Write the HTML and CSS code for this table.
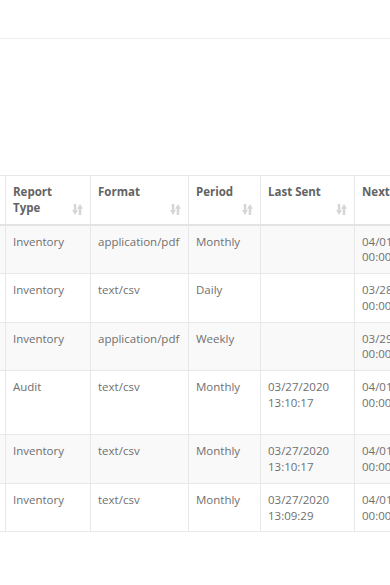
FILE: index.html
```html
<!DOCTYPE html>
<html lang="en">
  <head>
    <meta charset="UTF-8" />
    <meta name="viewport" content="width=device-width, initial-scale=1.0" />
    <title>Scheduled Reports</title>
    <link rel="stylesheet" href="styles.css">
  </head>
  <body>
    <div class="topbar"></div>

    <div class="content">
      <div class="table-wrap">
        <table class="report-table">
          <colgroup>
            <col class="c-name" />
            <col class="c-type" />
            <col class="c-format" />
            <col class="c-period" />
            <col class="c-last" />
            <col class="c-next" />
            <col class="c-recipients" />
          </colgroup>
          <thead>
            <tr>
              <th>Name</th>
              <th>Report Type <span class="sort"></span></th>
              <th>Format <span class="sort"></span></th>
              <th>Period <span class="sort"></span></th>
              <th>Last Sent <span class="sort"></span></th>
              <th>Next Sent <span class="sort"></span></th>
              <th>Recipients</th>
            </tr>
          </thead>
          <tbody>
            <tr>
              <td>Monthly stock</td>
              <td>Inventory</td>
              <td>application/pdf</td>
              <td>Monthly</td>
              <td></td>
              <td>04/01/2020 00:00:00</td>
              <td>ops@example.com</td>
            </tr>
            <tr>
              <td>Daily stock</td>
              <td>Inventory</td>
              <td>text/csv</td>
              <td>Daily</td>
              <td></td>
              <td>03/28/2020 00:00:00</td>
              <td>ops@example.com</td>
            </tr>
            <tr>
              <td>Weekly stock</td>
              <td>Inventory</td>
              <td>application/pdf</td>
              <td>Weekly</td>
              <td></td>
              <td>03/29/2020 00:00:00</td>
              <td>ops@example.com</td>
            </tr>
            <tr>
              <td>Audit log</td>
              <td>Audit</td>
              <td>text/csv</td>
              <td>Monthly</td>
              <td>03/27/2020 13:10:17</td>
              <td>04/01/2020 00:00:00</td>
              <td>admin@example.com audit@example.com ops@example.com</td>
            </tr>
            <tr>
              <td>Stock export</td>
              <td>Inventory</td>
              <td>text/csv</td>
              <td>Monthly</td>
              <td>03/27/2020 13:10:17</td>
              <td>04/01/2020 00:00:00</td>
              <td>ops@example.com</td>
            </tr>
            <tr>
              <td>Stock backup</td>
              <td>Inventory</td>
              <td>text/csv</td>
              <td>Monthly</td>
              <td>03/27/2020 13:09:29</td>
              <td>04/01/2020 00:00:00</td>
              <td>ops@example.com</td>
            </tr>
          </tbody>
        </table>
      </div>
    </div>
  </body>
</html>
```

FILE: styles.css
```css
* {
  margin: 0;
  padding: 0;
  box-sizing: border-box;
}
body {
  background-color: #fff;
  color: #6f6f6f;
  font-family: "Open Sans", sans-serif;
  font-size: 11.5px;
  overflow: hidden;
}
.topbar {
  height: 39px;
  border-bottom: 1px solid #eeeeee;
}
.content {
  padding-top: 136px;
}
.table-wrap {
  overflow: hidden;
  width: 390px;
}
.report-table {
  margin-left: -115px;
  width: 693px;
  table-layout: fixed;
  border-collapse: collapse;
}
.c-name {
  width: 120px;
}
.c-type {
  width: 85px;
}
.c-format {
  width: 98px;
}
.c-period {
  width: 72px;
}
.c-last {
  width: 94px;
}
.c-next {
  width: 94px;
}
.c-recipients {
  width: 130px;
}
.report-table th,
.report-table td {
  border: 1px solid #e8e8e8;
  padding: 8px 7px;
  line-height: 15.75px;
  text-align: left;
  vertical-align: top;
}
.report-table th {
  position: relative;
  height: 48px;
  padding-right: 22px;
  font-weight: 700;
  color: #636363;
  border-bottom: 2px solid #e3e3e3;
}
.report-table tbody tr:nth-child(odd) {
  background-color: #f9f9f9;
}
.sort {
  position: absolute;
  right: 7px;
  bottom: 9px;
  width: 11px;
  height: 11px;
  background: url("data:image/svg+xml;utf8,<svg xmlns='http://www.w3.org/2000/svg' viewBox='0 0 11 11'><g fill='%23d6d6d6'><rect x='1.7' y='0' width='2.6' height='7'/><polygon points='0,6.2 6,6.2 3,11'/><rect x='6.7' y='4' width='2.6' height='7'/><polygon points='5,4.8 11,4.8 8,0'/></g></svg>")
    no-repeat center/contain;
}
```
